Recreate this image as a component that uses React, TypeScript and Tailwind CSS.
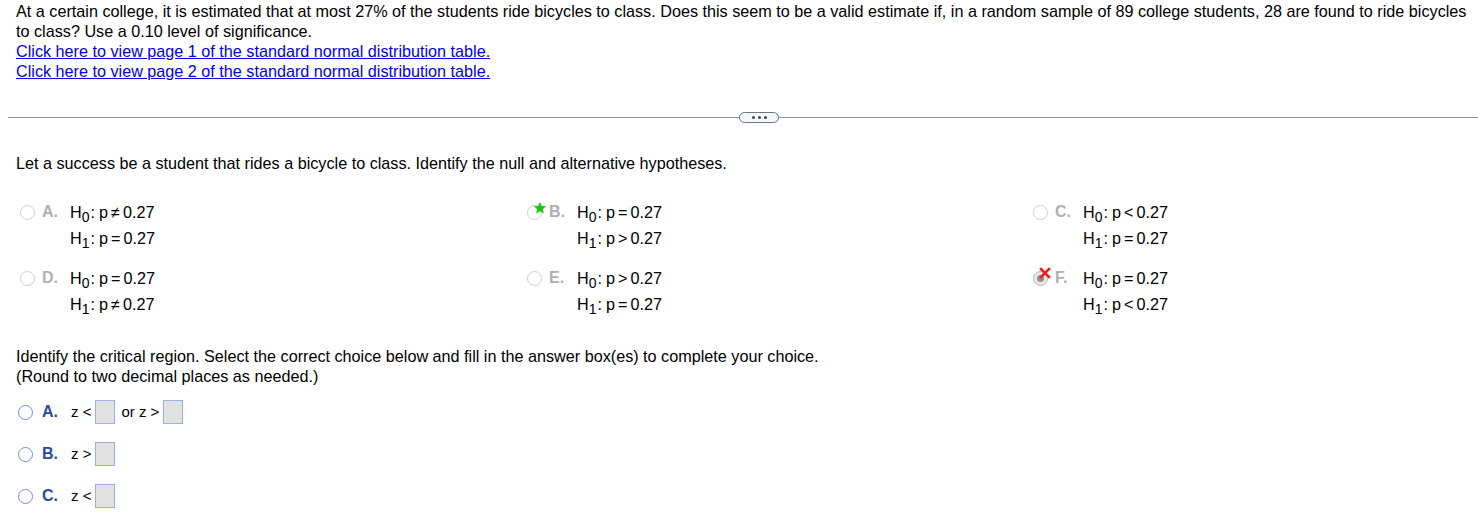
import React from "react";

const F = { fontFamily: '"Liberation Sans", Arial, sans-serif' };

function H({ n, rel, v }: { n: string; rel: string; v: string }) {
  return (
    <div className="flex items-baseline h-[26px] leading-[26px]">
      <span>H</span>
      <sub className="text-[14px] relative top-[4px] align-baseline">{n}</sub>
      <span className="ml-[1px]">:</span>
      <span className="ml-[4px]">p</span>
      <span className="mx-[3px]">{rel}</span>
      <span>{v}</span>
    </div>
  );
}

function Radio({ mark }: { mark?: "star" | "x" | "sel" }) {
  return (
    <span className="relative inline-block w-[15px] h-[15px] mt-[6px]">
      <span
        className={
          "absolute inset-0 rounded-full border-[1.5px] " +
          (mark === "x" ? "border-[#b8b8b8] bg-[#e8e8e8]" : "border-[#cfcfcf] bg-white")
        }
      />
      {mark === "x" && <span className="absolute left-[4px] top-[4px] w-[7px] h-[7px] rounded-full bg-[#8f8f8f]" />}
      {mark === "star" && (
        <svg className="absolute left-[6px] top-[-4px]" width="14" height="14" viewBox="0 0 24 24">
          <path d="M12 1.5l3.1 7 7.4.6-5.6 4.9 1.7 7.4L12 17.6l-6.6 3.8 1.7-7.4L1.5 9.1l7.4-.6z" fill="#14c814" />
        </svg>
      )}
      {mark === "x" && (
        <svg className="absolute left-[6px] top-[-4px]" width="12" height="12" viewBox="0 0 12 12">
          <path d="M2 2L10 10M10 2L2 10" stroke="#e8201c" strokeWidth="2.6" strokeLinecap="square" />
        </svg>
      )}
    </span>
  );
}

function Opt({ l, h0, h1, mark }: { l: string; h0: [string, string]; h1: [string, string]; mark?: "star" | "x" }) {
  return (
    <div className="flex items-start">
      <Radio mark={mark} />
      <span className="ml-[7px] w-[28px] text-[#b0b0b0] font-bold leading-[26px] text-[16px]">{l}</span>
      <div>
        <H n="0" rel={h0[0]} v={h0[1]} />
        <H n="1" rel={h1[0]} v={h1[1]} />
      </div>
    </div>
  );
}

function BlueRadio() {
  return <span className="inline-block w-[15px] h-[15px] rounded-full border-[1.5px] border-[#6f8fdc] bg-white" />;
}

function Box() {
  return <span className="inline-block w-[20px] h-[24px] bg-[#e1e1e1] border border-[#97b0e6]" />;
}

function COpt({ l, children }: { l: string; children: React.ReactNode }) {
  return (
    <div className="flex items-center h-[24px]">
      <BlueRadio />
      <span className="ml-[9px] w-[29px] text-[#2b4aa8] font-bold text-[16px]">{l}</span>
      <div className="flex items-center text-[15px]">{children}</div>
    </div>
  );
}

export default function App() {
  return (
    <div style={F} className="w-[1478px] h-[512px] bg-white text-black text-[16.2px] overflow-hidden">
      <div className="pl-[16px] pr-[6px] pt-[1px] leading-[20px]">
        <p>
          At a certain college, it is estimated that at most 27% of the students ride bicycles to class. Does this seem to be a valid estimate if, in a random sample of 89 college students, 28 are found to ride bicycles to class? Use a 0.10 level of significance.
        </p>
        <a className="block w-fit text-[#0000ee] underline" href="#">Click here to view page 1 of the standard normal distribution table.</a>
        <a className="block w-fit text-[#0000ee] underline" href="#">Click here to view page 2 of the standard normal distribution table.</a>
      </div>

      <div className="mt-[30px] ml-[8px] flex items-center h-[12px]">
        <div className="w-[731px] h-px bg-[#8a9098]" />
        <div className="w-[40px] h-[11px] rounded-full border border-[#6c7680] bg-[#f4f6f8] flex items-center justify-center gap-[3px]">
          <span className="w-[3px] h-[3px] bg-[#3c4650] rounded-full" />
          <span className="w-[3px] h-[3px] bg-[#3c4650] rounded-full" />
          <span className="w-[3px] h-[3px] bg-[#3c4650] rounded-full" />
        </div>
        <div className="flex-1 h-px bg-[#8a9098]" />
      </div>

      <p className="pl-[16px] mt-[30px] leading-[20px]">
        Let a success be a student that rides a bicycle to class. Identify the null and alternative hypotheses.
      </p>

      <div className="pl-[20px] mt-[26px] grid grid-cols-[507px_506px_1fr] gap-y-[14px]">
        <Opt l="A." h0={["≠", "0.27"]} h1={["=", "0.27"]} />
        <Opt l="B." h0={["=", "0.27"]} h1={[">", "0.27"]} mark="star" />
        <Opt l="C." h0={["<", "0.27"]} h1={["=", "0.27"]} />
        <Opt l="D." h0={["=", "0.27"]} h1={["≠", "0.27"]} />
        <Opt l="E." h0={[">", "0.27"]} h1={["=", "0.27"]} />
        <Opt l="F." h0={["=", "0.27"]} h1={["<", "0.27"]} mark="x" />
      </div>

      <div className="pl-[16px] mt-[29px] leading-[20px]">
        <p>Identify the critical region. Select the correct choice below and fill in the answer box(es) to complete your choice.</p>
        <p>(Round to two decimal places as needed.)</p>
      </div>

      <div className="pl-[18px] mt-[14px] flex flex-col gap-[18px]">
        <COpt l="A.">
          <span className="mr-[4px]">z &lt;</span>
          <Box />
          <span className="ml-[6px] mr-[4px]">or z &gt;</span>
          <Box />
        </COpt>
        <COpt l="B.">
          <span className="mr-[4px]">z &gt;</span>
          <Box />
        </COpt>
        <COpt l="C.">
          <span className="mr-[4px]">z &lt;</span>
          <Box />
        </COpt>
      </div>
    </div>
  );
}
